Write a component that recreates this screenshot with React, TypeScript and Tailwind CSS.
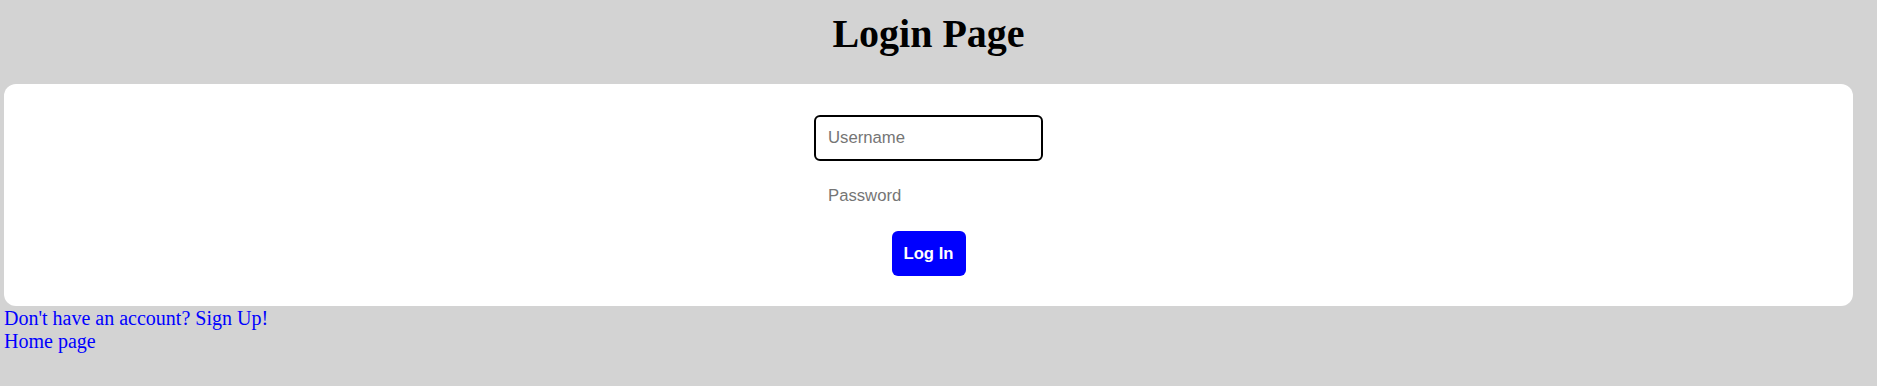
import React from "react";

export default function App() {
  return (
    <div
      className="min-h-screen bg-[#d3d3d3] pl-[4px] pr-[24px]"
      style={{ fontFamily: '"Liberation Serif", "Times New Roman", serif' }}
    >
      <h1 className="pt-[12px] text-center text-[40px] font-bold leading-[44px] text-black">
        Login Page
      </h1>
      <div className="mt-[28px] flex h-[222px] flex-col items-center gap-[12px] rounded-[12px] bg-white pt-[31px]">
        <input
          type="text"
          placeholder="Username"
          className="h-[46px] w-[229px] rounded-[6px] border-2 border-black bg-white px-[12px] text-[16.7px] text-black outline-none placeholder:text-[#757575]"
          style={{ fontFamily: '"Liberation Sans", Arial, sans-serif' }}
        />
        <input
          type="password"
          placeholder="Password"
          className="h-[46px] w-[229px] rounded-[6px] border-2 border-white bg-white px-[12px] text-[16.7px] text-black outline-none placeholder:text-[#757575]"
          style={{ fontFamily: '"Liberation Sans", Arial, sans-serif' }}
        />
        <button
          type="button"
          className="h-[45px] w-[74px] rounded-[6px] bg-[#0000ff] text-[16.7px] font-bold text-white"
          style={{ fontFamily: '"Liberation Sans", Arial, sans-serif' }}
        >
          Log In
        </button>
      </div>
      <a href="#" className="mt-[1px] block text-[20px] leading-[22.5px] text-[#0000ff]">
        Don't have an account? Sign Up!
      </a>
      <a href="#" className="block text-[20px] leading-[22.5px] text-[#0000ff]">
        Home page
      </a>
    </div>
  );
}
